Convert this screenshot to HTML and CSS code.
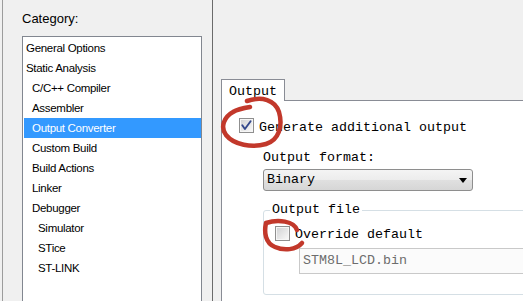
FILE: index.html
```html
<!DOCTYPE html>
<html>
<head>
<meta charset="utf-8">
<link rel="stylesheet" href="styles.css">
</head>
<body>
<div class="window">
  <div class="cat-panel">
    <div class="cat-label">Category:</div>
    <ul class="cat-list">
      <li class="l0">General Options</li>
      <li class="l0">Static Analysis</li>
      <li class="l1">C/C++ Compiler</li>
      <li class="l1">Assembler</li>
      <li class="l1 sel">Output Converter</li>
      <li class="l1">Custom Build</li>
      <li class="l1">Build Actions</li>
      <li class="l1">Linker</li>
      <li class="l1">Debugger</li>
      <li class="l2">Simulator</li>
      <li class="l2">STice</li>
      <li class="l2">ST-LINK</li>
    </ul>
  </div>
  <div class="opt-panel">
    <div class="tabbar">
      <div class="tab">Output</div>
      <div class="tab-rest"></div>
    </div>
    <div class="page">
      <div class="check-row first">
        <span class="cb"><svg width="13" height="13" viewBox="0 0 13 13"><path d="M2.3 6.3 L4.9 10 L10.6 2.2" fill="none" stroke="#33488c" stroke-width="1.9" stroke-linecap="round" stroke-linejoin="round"/></svg></span>
        <span>Generate additional output</span>
      </div>
      <div class="sub">
        <div class="field-label">Output format:</div>
        <div class="select"><span>Binary</span><span class="arrow"></span></div>
        <fieldset class="group">
          <legend>Output file</legend>
          <div class="check-row second">
            <span class="cb"></span>
            <span>Override default</span>
          </div>
          <div class="textbox">STM8L_LCD.bin</div>
        </fieldset>
      </div>
    </div>
  </div>
  <svg class="marks" width="523" height="301" viewBox="0 0 523 301">
    <path d="M247 101 C262 96 275 100 279 112 C283 126 279 140 266 144 C252 148 234 145 226 135 C220 127 224 117 233 112 C238 109 244 108 250 107" fill="none" stroke="#c2382b" stroke-width="4.5" stroke-linecap="round" stroke-linejoin="round"/>
    <path d="M297 230 C294 221 278 219 266 223 C264 232 265 243 275 247 C284 251 296 250 302 243" fill="none" stroke="#c2382b" stroke-width="4.5" stroke-linecap="round" stroke-linejoin="round"/>
  </svg>
</div>
</body>
</html>
```

FILE: styles.css
```css
html, body {
  margin: 0;
  padding: 0;
  background: #f0f0f0;
  overflow: hidden;
}

.window {
  position: relative;
  width: 523px;
  height: 301px;
  display: flex;
  overflow: hidden;
  background: #f0f0f0;
  color: #000;
}

.cat-panel {
  box-sizing: border-box;
  width: 211px;
  margin-left: 2px;
  padding-left: 19px;
  border-left: 1px solid #9c9c9c;
  border-right: 1px solid #6b6b6b;
  flex: none;
}

.cat-label {
  font-family: "Liberation Sans", Arial, sans-serif;
  font-size: 13px;
  line-height: 16px;
  padding-top: 11px;
}

.cat-list {
  box-sizing: border-box;
  list-style: none;
  margin: 9px 0 0;
  padding: 1px 0 0 1px;
  width: 180px;
  height: 300px;
  border: 1px solid #828790;
  background: #fff;
}

.cat-list li {
  height: 20px;
  line-height: 20px;
  font-family: "Liberation Sans", Arial, sans-serif;
  font-size: 11.5px;
  letter-spacing: -0.3px;
  white-space: nowrap;
}

.cat-list .l0 { padding-left: 2px; }
.cat-list .l1 { padding-left: 8px; }
.cat-list .l2 { padding-left: 14px; }

.cat-list .sel {
  background: #3399ff;
  color: #fff;
}

.opt-panel {
  flex: 1;
  padding-left: 8px;
  padding-top: 79px;
  font-family: "Liberation Mono", "Courier New", monospace;
  font-size: 13.33px;
  min-width: 0;
}

.tabbar {
  display: flex;
  height: 22px;
}

.tab {
  box-sizing: border-box;
  width: 64px;
  height: 22px;
  border: 1px solid #898c95;
  border-bottom: none;
  background: #fff;
  padding-left: 7px;
  padding-top: 3px;
  line-height: 18px;
  white-space: nowrap;
}

.tab-rest {
  flex: 1;
  border-bottom: 1px solid #898c95;
}

.page {
  background: #fff;
  border-left: 1px solid #898c95;
  height: 220px;
  padding-left: 17px;
  padding-top: 1px;
}

.check-row {
  display: flex;
  align-items: flex-start;
  height: 16px;
  line-height: 16px;
  white-space: nowrap;
}

.check-row.first {
  margin-top: 18px;
}

.cb {
  box-sizing: border-box;
  flex: none;
  width: 15px;
  height: 15px;
  margin-top: -2px;
  margin-right: 5px;
  border: 1px solid #8f8f8f;
  background: linear-gradient(135deg, #cfd0d2 0%, #eeeeee 70%, #fafafa 100%);
  box-shadow: inset 0 0 0 1px #f6f6f6;
  display: flex;
  align-items: center;
  justify-content: center;
}

.sub {
  margin-left: 24px;
}

.field-label {
  margin-top: 14px;
  line-height: 16px;
  white-space: nowrap;
}

.select {
  box-sizing: border-box;
  margin-top: 3px;
  width: 210px;
  height: 22px;
  border: 1px solid #8e8e8e;
  border-radius: 3px;
  background: linear-gradient(#f4f4f4 0%, #ececec 50%, #e0e0e0 51%, #d6d6d6 100%);
  display: flex;
  align-items: center;
  justify-content: space-between;
  padding-left: 3px;
  padding-right: 5px;
  line-height: 20px;
}

.arrow {
  width: 0;
  height: 0;
  border-left: 4px solid transparent;
  border-right: 4px solid transparent;
  border-top: 5px solid #000;
}

.group {
  box-sizing: border-box;
  margin: 11px 0 0;
  padding: 0 0 20px 6px;
  width: 300px;
  min-width: 0;
  border: 1px solid #d5dfe5;
  border-radius: 3px;
}

.group legend {
  padding: 0 2px;
  line-height: 16px;
  white-space: nowrap;
}

.check-row.second {
  margin-top: 9px;
  margin-left: 5px;
}

.check-row.second .cb {
  margin-top: -1px;
}

.textbox {
  box-sizing: border-box;
  margin-top: 5px;
  margin-left: 29px;
  height: 26px;
  border: 1px solid #c9c9c9;
  background: #fbfbfb;
  color: #6d6d6d;
  padding-left: 3px;
  line-height: 24px;
  white-space: nowrap;
}

.marks {
  position: absolute;
  left: 0;
  top: 0;
  pointer-events: none;
}
```
